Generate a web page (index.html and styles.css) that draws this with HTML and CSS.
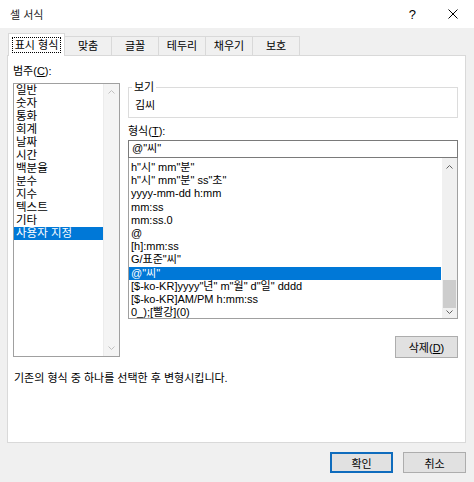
FILE: index.html
```html
<!DOCTYPE html>
<html lang="ko">
<head>
    <meta charset="UTF-8">
    <meta name="viewport" content="width=device-width, initial-scale=1.0">
    <title>셀 서식</title>
    <link rel="stylesheet" href="styles.css">
</head>
<body>
    <div class="dialog">
        <!-- Barre de titre -->
        <div class="titlebar">
            <span class="title">셀 서식</span>
            <span class="help">?</span>
            <span class="close">
                <svg width="10" height="10" viewBox="0 0 10 10"><path d="M0.5 0.5 L9.5 9.5 M9.5 0.5 L0.5 9.5" stroke="#000" stroke-width="1" fill="none"/></svg>
            </span>
        </div>

        <!-- Onglets -->
        <div class="tabs">
            <div class="tab active"><span class="focus">표시 형식</span></div>
            <div class="tab">맞춤</div>
            <div class="tab">글꼴</div>
            <div class="tab">테두리</div>
            <div class="tab">채우기</div>
            <div class="tab">보호</div>
        </div>

        <div class="panel">
            <div class="columns">
                <div class="left">
                    <div class="label">범주(<u>C</u>):</div>
                    <div class="listbox category">
                        <ul class="items">
                            <li>일반</li>
                            <li>숫자</li>
                            <li>통화</li>
                            <li>회계</li>
                            <li>날짜</li>
                            <li>시간</li>
                            <li>백분율</li>
                            <li>분수</li>
                            <li>지수</li>
                            <li>텍스트</li>
                            <li>기타</li>
                            <li class="selected">사용자 지정</li>
                        </ul>
                        <div class="scrollbar disabled">
                            <svg class="arrow" width="7" height="4" viewBox="0 0 7 4"><polyline points="0.5,3.5 3.5,0.5 6.5,3.5" fill="none" stroke="currentColor"/></svg>
                            <div class="track"></div>
                            <svg class="arrow" width="7" height="4" viewBox="0 0 7 4"><polyline points="0.5,0.5 3.5,3.5 6.5,0.5" fill="none" stroke="currentColor"/></svg>
                        </div>
                    </div>
                </div>

                <div class="right">
                    <fieldset class="sample">
                        <legend>보기</legend>
                        <div class="sample-value">김씨</div>
                    </fieldset>
                    <div class="label format-label">형식(<u>T</u>):</div>
                    <div class="input">@"씨"</div>
                    <div class="listbox formats">
                        <ul class="items">
                            <li>h"시" mm"분"</li>
                            <li>h"시" mm"분" ss"초"</li>
                            <li>yyyy-mm-dd h:mm</li>
                            <li>mm:ss</li>
                            <li>mm:ss.0</li>
                            <li>@</li>
                            <li>[h]:mm:ss</li>
                            <li>G/표준"씨"</li>
                            <li class="selected">@"씨"</li>
                            <li>[$-ko-KR]yyyy"년" m"월" d"일" dddd</li>
                            <li>[$-ko-KR]AM/PM h:mm:ss</li>
                            <li>0_);[빨강](0)</li>
                        </ul>
                        <div class="scrollbar">
                            <svg class="arrow" width="7" height="4" viewBox="0 0 7 4"><polyline points="0.5,3.5 3.5,0.5 6.5,3.5" fill="none" stroke="currentColor"/></svg>
                            <div class="track"><div class="thumb"></div></div>
                            <svg class="arrow" width="7" height="4" viewBox="0 0 7 4"><polyline points="0.5,0.5 3.5,3.5 6.5,0.5" fill="none" stroke="currentColor"/></svg>
                        </div>
                    </div>
                    <div class="actions">
                        <button class="btn">삭제(<u>D</u>)</button>
                    </div>
                </div>
            </div>
            <p class="hint">기존의 형식 중 하나를 선택한 후 변형시킵니다.</p>
        </div>

        <div class="footer">
            <button class="btn default">확인</button>
            <button class="btn">취소</button>
        </div>
    </div>
</body>
</html>
```

FILE: styles.css
```css
* {
    margin: 0;
    padding: 0;
    box-sizing: border-box;
}

body {
    font-family: "Liberation Sans", "Noto Sans CJK KR", sans-serif;
    font-size: 11px;
    color: #000;
    background-color: #f0f0f0;
}

.dialog {
    width: 474px;
    height: 482px;
    display: flex;
    flex-direction: column;
    background-color: #f0f0f0;
}

.titlebar {
    height: 28px;
    background-color: #fff;
    display: flex;
    align-items: center;
    padding: 0 16px 0 10px;
}

.titlebar .title {
    flex-grow: 1;
    color: #222;
}

.titlebar .help {
    font-size: 13px;
    margin-right: 32px;
}

.titlebar .close svg {
    display: block;
}

.tabs {
    display: flex;
    align-items: flex-end;
    height: 27px;
    padding-left: 8px;
}

.tab {
    height: 19px;
    min-width: 47px;
    padding: 0 6px;
    display: flex;
    align-items: center;
    justify-content: center;
    border: 1px solid #d9d9d9;
    border-bottom: none;
    border-left: none;
    line-height: 15px;
    white-space: nowrap;
}

.tab.active {
    height: 23px;
    min-width: 57px;
    border-left: 1px solid #d9d9d9;
    background-color: #fff;
    margin-bottom: -1px;
    position: relative;
    z-index: 1;
    padding: 0 1px;
}

.tab .focus {
    border: 1px dotted #000;
    padding: 0 2px;
    line-height: 14px;
}

.panel {
    flex-grow: 1;
    margin: 0 8px 0 7px;
    background-color: #fff;
    border: 1px solid #d9d9d9;
    padding: 8px 7px 0 5px;
}

.columns {
    display: grid;
    grid-template-columns: 107px 330px;
    gap: 8px;
}

.label {
    line-height: 15px;
    margin-bottom: 4px;
}

.listbox {
    display: flex;
    border: 1px solid #a0a0a0;
    background-color: #fff;
}

.listbox .items {
    list-style: none;
    flex-grow: 1;
}

.listbox .items li {
    line-height: 13px;
    height: 13px;
    padding-left: 2px;
    white-space: nowrap;
}

.listbox .items li.selected {
    background-color: #0078d7;
    color: #fff;
}

.category {
    height: 274px;
}

.category .items li {
    font-size: 11.5px;
}

.scrollbar {
    width: 16px;
    background-color: #f0f0f0;
    display: flex;
    flex-direction: column;
    align-items: center;
    padding: 6px 0;
    color: #606060;
}

.scrollbar.disabled {
    color: #c0c0c0;
    background-color: #f4f4f4;
    border-left: 1px solid #ececec;
}

.scrollbar .track {
    flex-grow: 1;
    width: 100%;
    display: flex;
    flex-direction: column;
    justify-content: flex-end;
    padding-bottom: 2px;
}

.scrollbar .thumb {
    height: 28px;
    margin: 0 1px;
    background-color: #cdcdcd;
}

.sample {
    margin-top: 17px;
    border: 1px solid #dcdcdc;
    padding: 4px 7px 4px 3px;
}

.sample legend {
    padding: 0 2px;
    line-height: 13px;
}

.sample-value {
    line-height: 15px;
    padding-left: 3px;
}

.format-label {
    margin-top: 6px;
    margin-bottom: 1px;
}

.input {
    height: 18px;
    border: 1px solid #7a7a7a;
    line-height: 15px;
    padding-left: 3px;
}

.formats {
    height: 161px;
    border-top: none;
}

.formats .items {
    padding: 3px 1px 0 0;
}

.formats .items li {
    height: 13.2px;
    line-height: 13.2px;
}

.formats .scrollbar {
    width: 15px;
    padding: 7px 0 4px;
}

.actions {
    display: flex;
    justify-content: flex-end;
    margin-top: 17px;
}

.btn {
    font-family: inherit;
    font-size: 11px;
    width: 63px;
    height: 22px;
    background-color: #e1e1e1;
    border: 1px solid #adadad;
    color: #000;
}

.hint {
    margin-top: 13px;
    line-height: 15px;
    padding-left: 1px;
}

.footer {
    height: 39px;
    display: flex;
    justify-content: flex-end;
    gap: 10px;
    padding: 9px 8px 0 0;
}

.footer .btn {
    height: 21px;
}

.btn.default {
    border: 2px solid #0f6cbd;
}
```
